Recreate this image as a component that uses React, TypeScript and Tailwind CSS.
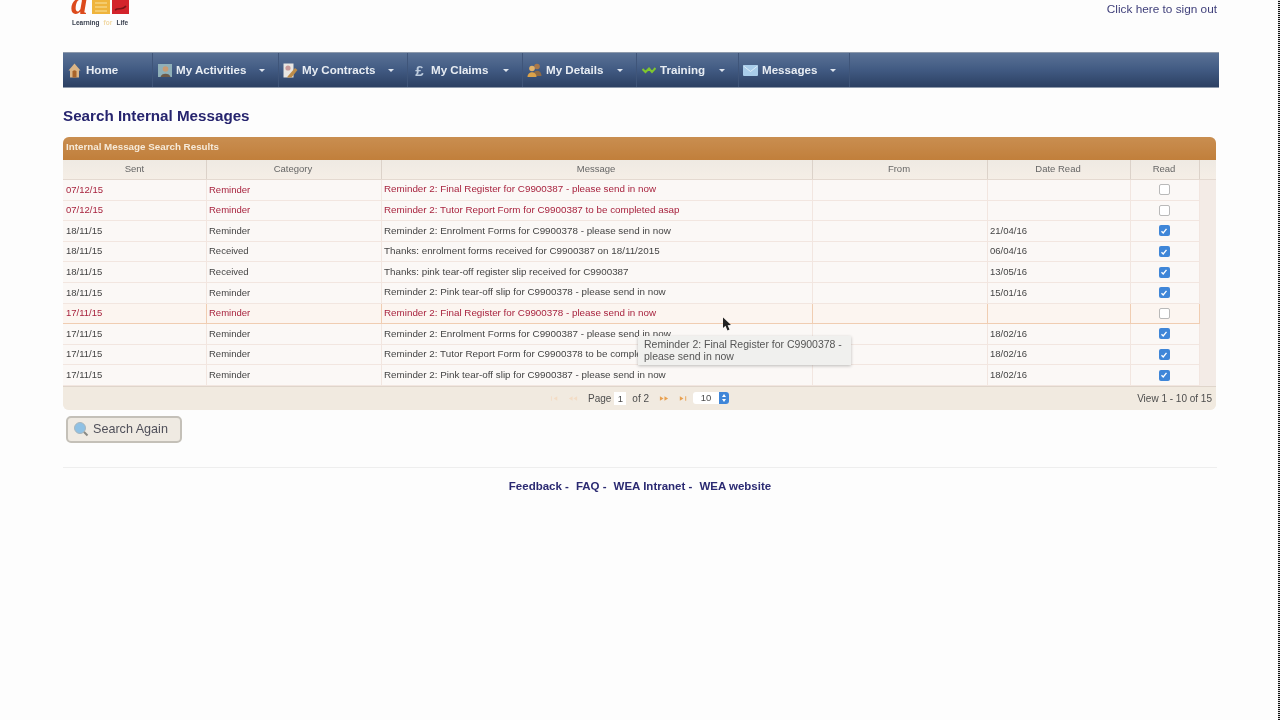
const navItems = [
  { label: 'Home', icon: 'home', width: 'w-[90px]', arrow: false },
  { label: 'My Activities', icon: 'activities', width: 'w-[126px]', arrow: true },
  { label: 'My Contracts', icon: 'contracts', width: 'w-[129px]', arrow: true },
  { label: 'My Claims', icon: 'claims', width: 'w-[115px]', arrow: true },
  { label: 'My Details', icon: 'details', width: 'w-[114px]', arrow: true },
  { label: 'Training', icon: 'training', width: 'w-[102px]', arrow: true },
  { label: 'Messages', icon: 'messages', width: 'w-[111px]', arrow: true },
];

const rows = [
  { sent: '07/12/15', category: 'Reminder', message: 'Reminder 2: Final Register for C9900387 - please send in now', read: '', checked: false, unread: true },
  { sent: '07/12/15', category: 'Reminder', message: 'Reminder 2: Tutor Report Form for C9900387 to be completed asap', read: '', checked: false, unread: true },
  { sent: '18/11/15', category: 'Reminder', message: 'Reminder 2: Enrolment Forms for C9900378 - please send in now', read: '21/04/16', checked: true },
  { sent: '18/11/15', category: 'Received', message: 'Thanks: enrolment forms received for C9900387 on 18/11/2015', read: '06/04/16', checked: true },
  { sent: '18/11/15', category: 'Received', message: 'Thanks: pink tear-off register slip received for C9900387', read: '13/05/16', checked: true },
  { sent: '18/11/15', category: 'Reminder', message: 'Reminder 2: Pink tear-off slip for C9900378 - please send in now', read: '15/01/16', checked: true },
  { sent: '17/11/15', category: 'Reminder', message: 'Reminder 2: Final Register for C9900378 - please send in now', read: '', checked: false, unread: true, hover: true },
  { sent: '17/11/15', category: 'Reminder', message: 'Reminder 2: Enrolment Forms for C9900387 - please send in now', read: '18/02/16', checked: true },
  { sent: '17/11/15', category: 'Reminder', message: 'Reminder 2: Tutor Report Form for C9900378 to be completed asap', read: '18/02/16', checked: true },
  { sent: '17/11/15', category: 'Reminder', message: 'Reminder 2: Pink tear-off slip for C9900387 - please send in now', read: '18/02/16', checked: true },
];

const columns = 'grid grid-cols-[144px_175px_431px_175px_143px_69px_16px]';

function NavIcon({ name }: { name: string }) {
  if (name === 'home') {
    return (
      <svg width="13" height="15" viewBox="0 0 13 15">
        <path d="M6.5 0.5 L12.5 7.5 L11 7.5 L11 14.5 L2 14.5 L2 7.5 L0.5 7.5 Z" fill="#dcb585" />
        <path d="M4.5 14.5 L4.5 8.5 Q6.5 6 8.5 8.5 L8.5 14.5 Z" fill="#a8642a" />
      </svg>
    );
  }
  if (name === 'activities') {
    return (
      <svg width="14" height="13" viewBox="0 0 14 13">
        <rect width="14" height="13" fill="#8fb0b8" />
        <circle cx="7.5" cy="5" r="2.8" fill="#c99a72" />
        <path d="M2.5 13 C3 8.5 12 8.5 12.5 13 Z" fill="#6d5a48" />
      </svg>
    );
  }
  if (name === 'contracts') {
    return (
      <svg width="15" height="15" viewBox="0 0 15 15">
        <path d="M0.5 0.5 L10.5 0.5 L10.5 14.5 L0.5 14.5 Z" fill="#e8e6e2" />
        <circle cx="5" cy="5" r="2.6" fill="#c99a9a" />
        <path d="M5 13 L12 5 L14.5 7 L8.5 14.5 L4 14.5 Z" fill="#bd8c48" />
      </svg>
    );
  }
  if (name === 'claims') {
    return <span className="text-[15px] leading-none text-[#bccbdd]">£</span>;
  }
  if (name === 'details') {
    return (
      <svg width="15" height="14" viewBox="0 0 15 14">
        <circle cx="10" cy="3.5" r="2.8" fill="#a9784a" />
        <path d="M6 13 C6 6 14.5 6 14.5 13 Z" fill="#8f6b45" />
        <circle cx="5" cy="5.5" r="2.8" fill="#e3b36a" />
        <path d="M0.5 14 C0.5 7.5 9.5 7.5 9.5 14 Z" fill="#dba24a" />
      </svg>
    );
  }
  if (name === 'training') {
    return (
      <svg width="14" height="8" viewBox="0 0 14 8">
        <path d="M0.5 3 L3.5 6 L7 2.5 L10 6 L13.5 2" fill="none" stroke="#7fc72e" strokeWidth="2" />
      </svg>
    );
  }
  return (
    <svg width="15" height="11" viewBox="0 0 15 11">
      <rect width="15" height="11" rx="1" fill="#a9cdea" />
      <path d="M0.5 1 L7.5 6.5 L14.5 1" fill="none" stroke="#dcecf8" strokeWidth="1" />
    </svg>
  );
}

function PagerIcon({ kind, color }: { kind: string; color: string }) {
  const paths: Record<string, string> = {
    first: 'M1 1 L2 1 L2 6 L1 6 Z M8 1 L8 6 L4 3.5 Z',
    prev: 'M5 1 L5 6 L1 3.5 Z M10 1 L10 6 L6 3.5 Z',
    next: 'M1 1 L5 3.5 L1 6 Z M6 1 L10 3.5 L6 6 Z',
    last: 'M2 1 L6 3.5 L2 6 Z M8 1 L9 1 L9 6 L8 6 Z',
  };
  return (
    <svg width="10" height="7" viewBox="0 0 11 7">
      <path d={paths[kind]} fill={color} />
    </svg>
  );
}

function Logo() {
  return (
    <div className="w-[58px] h-[28px]">
      <div className="flex items-start h-[14px]">
        <span className="w-[21px] h-[14px] -mt-[4px] text-[33px] leading-[14px] font-bold italic text-[#dc4a1c] font-['Liberation_Serif',serif]">a</span>
        <svg width="37" height="14" viewBox="0 0 37 14">
          <rect width="18" height="14" fill="#efb43c" />
          <path d="M3 3 L15 3 M3 7 L15 7 M3 11 L15 11" stroke="#f6d27e" strokeWidth="1.5" />
          <rect x="20" width="17" height="14" fill="#d3232b" />
          <path d="M23 10 C27 7 30 11 34 6" fill="none" stroke="#7c1418" strokeWidth="1.6" />
        </svg>
      </div>
      <div className="mt-[4px] flex justify-between px-[1px] text-[6.5px] leading-[9px] font-bold text-[#39404f]">
        <span>Learning</span>
        <span className="text-[#f1d9a5]">for</span>
        <span>Life</span>
      </div>
    </div>
  );
}

function Checkbox({ checked }: { checked?: boolean }) {
  if (checked) {
    return (
      <div className="w-[11px] h-[11px] rounded-[2px] bg-[#3f86d8] flex items-center justify-center">
        <svg width="8" height="8" viewBox="0 0 8 8">
          <path d="M1.5 4.2 L3.2 6 L6.5 1.8" fill="none" stroke="white" strokeWidth="1.3" />
        </svg>
      </div>
    );
  }
  return <div className="w-[11px] h-[11px] rounded-[2px] bg-white border border-[#b9b9b9]"></div>;
}

export default function App() {
  return (
    <div className="relative w-[1280px] h-[720px] overflow-hidden bg-[#fdfdfd] font-['Liberation_Sans',Arial,sans-serif] blur-[0.5px]">
      <div className="pl-[63px] pr-[61px]">
        <div className="flex justify-between h-[52px]">
          <div className="pl-[8px]">
            <Logo />
          </div>
          <a className="mt-[2px] mr-[2px] text-[11.8px] leading-[14px] text-[#3f3f7a]">Click here to sign out</a>
        </div>

        <nav className="flex items-center h-[36px] border-t border-b border-[#8e9aac] bg-gradient-to-b from-[#5a7296] via-[#415a82] to-[#2c4063] text-[11.6px] font-bold text-[#e8edf3]">
          {navItems.map((item) => (
            <div key={item.label} className={`${item.width} h-full flex items-center pl-[4px] border-r border-[#3f5579]`}>
              <span className="w-[15px] flex justify-center"><NavIcon name={item.icon} /></span>
              <span className="ml-[4px] whitespace-nowrap">{item.label}</span>
              {item.arrow && (
                <span className="ml-auto mr-[13px] w-0 h-0 border-x-[3px] border-x-transparent border-t-[3px] border-t-[#dfe6ef]"></span>
              )}
            </div>
          ))}
        </nav>

        <h1 className="mt-[18px] text-[15.2px] leading-[19px] font-bold text-[#26246e]">Search Internal Messages</h1>

        <div className="relative mt-[12px] w-[1153px] rounded-[6px] bg-[#f3ebe6] text-[9.5px] text-[#444444]">
          <div className="h-[23px] flex items-center pl-[3px] pb-[2px] rounded-t-[6px] bg-gradient-to-b from-[#c98e50] to-[#c17f3b] text-[9.8px] text-[#f6ead9] font-bold">
            Internal Message Search Results
          </div>

          <div className={`${columns} h-[20px] border-b border-[#e4d9d0] bg-gradient-to-b from-[#efeae3] to-[#f5eee6] text-[#666666]`}>
            {['Sent', 'Category', 'Message', 'From', 'Date Read', 'Read', ''].map((head, i) => (
              <div key={i} className={`flex items-center justify-center border-r border-[#dcd2c9] last:border-r-0 ${i > 0 ? 'pr-[2px]' : ''}`}>{head}</div>
            ))}
          </div>

          {rows.map((row, i) => (
            <div key={i} className={`${columns} h-[20.6px] ${row.unread ? 'text-[#a8243f]' : 'text-[#444444]'}`}>
              {[row.sent, row.category, row.message, '', row.read].map((cell, j) => (
                <div
                  key={j}
                  className={`flex items-center whitespace-nowrap overflow-hidden border-r border-b ${j === 0 ? 'pl-[3px]' : 'pl-[2px]'} ${j === 2 ? 'text-[9.83px]' : ''} ${row.hover ? 'bg-[#fcf5f0] border-[#f0cdb2]' : 'bg-[#fbf8f6] border-[#f2e6e0]'}`}
                >
                  {cell}
                </div>
              ))}
              <div className={`flex items-center justify-center pr-[2px] border-r border-b ${row.hover ? 'bg-[#fcf5f0] border-[#f0cdb2]' : 'bg-[#fbf8f6] border-[#f2e6e0]'}`}>
                <Checkbox checked={row.checked} />
              </div>
              <div></div>
            </div>
          ))}

          <div className="relative h-[24px] flex items-center justify-center rounded-b-[6px] bg-[#f1eae0] border-t border-[#dfd5cb] text-[#4d4d4d]">
            <div className="flex items-center">
              <PagerIcon kind="first" color="#f3dcc5" />
              <span className="ml-[8px]"><PagerIcon kind="prev" color="#f3dcc5" /></span>
              <span className="ml-[10px] text-[10px]">Page</span>
              <span className="ml-[3px] w-[12px] h-[13px] bg-white text-center leading-[13px]">1</span>
              <span className="ml-[6px] text-[10px]">of 2</span>
              <span className="ml-[10px]"><PagerIcon kind="next" color="#e8a050" /></span>
              <span className="ml-[9px]"><PagerIcon kind="last" color="#e8a050" /></span>
              <div className="ml-[5px] w-[36px] h-[12px] flex rounded-[3px] overflow-hidden bg-white">
                <span className="flex-1 text-center leading-[12px]">10</span>
                <span className="w-[10px] bg-[#3f86d8] flex flex-col items-center justify-center gap-[2px]">
                  <span className="w-0 h-0 border-x-[2px] border-x-transparent border-b-[3px] border-b-white"></span>
                  <span className="w-0 h-0 border-x-[2px] border-x-transparent border-t-[3px] border-t-white"></span>
                </span>
              </div>
            </div>
            <span className="absolute right-[4px] text-[10px]">View 1 - 10 of 15</span>
          </div>

          <div className="absolute left-[575px] top-[199px] w-[213px] h-[29px] pl-[6px] pr-[2px] pt-[2px] bg-[#f0f0ee] shadow-[0_1px_3px_rgba(0,0,0,0.25)] text-[10.5px] leading-[12px] text-[#555555]">
            Reminder 2: Final Register for C9900378 - please send in now
          </div>
          <svg className="absolute left-[659px] top-[180px]" width="10" height="15" viewBox="0 0 10 15">
            <path d="M1 0.5 L1 11 L3.5 8.8 L5.5 13.5 L7.5 12.6 L5.6 8.2 L9 8 Z" fill="#222222" />
          </svg>
        </div>

        <button className="mt-[6px] ml-[3px] w-[116px] h-[27px] flex items-center rounded-[5px] border-2 border-[#c4c0b8] bg-[#efeae2] text-[12.6px] text-[#50505a]">
          <svg className="ml-[5px]" width="16" height="16" viewBox="0 0 16 16">
            <circle cx="7" cy="7" r="5.5" fill="#8fc1e4" stroke="#a8b6bd" />
            <path d="M11 11 L14.5 14.5" stroke="#8a8a84" strokeWidth="2" />
          </svg>
          <span className="ml-[4px]">Search Again</span>
        </button>

        <div className="mt-[24px] h-[1px] w-[1154px] bg-[#eeeeee]"></div>

        <div className="mt-[11px] flex justify-center w-[1154px] text-[11.5px] leading-[14px] font-bold text-[#2b2a72]">
          <a>Feedback -</a>
          <a className="ml-[7px]">FAQ -</a>
          <a className="ml-[7px]">WEA Intranet -</a>
          <a className="ml-[7px]">WEA website</a>
        </div>
      </div>
      <div className="absolute right-0 top-0 w-[2px] h-full bg-[repeating-linear-gradient(0deg,#111111_0,#111111_1px,#dddddd_1px,#dddddd_2px)]"></div>
    </div>
  );
}
